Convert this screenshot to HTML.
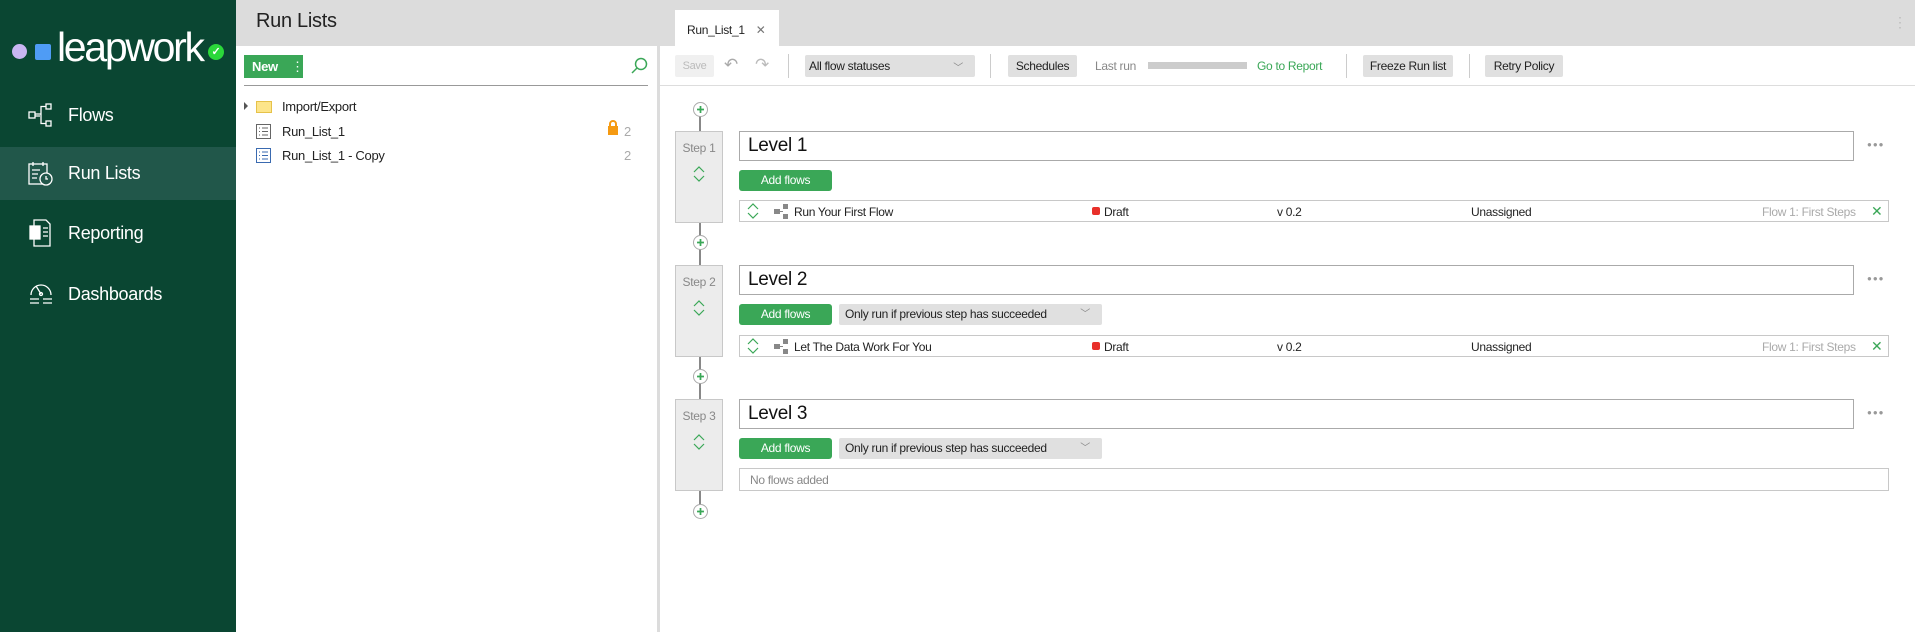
<!DOCTYPE html>
<html><head><meta charset="utf-8"><style>
*{box-sizing:border-box;margin:0;padding:0}
body{width:1915px;height:632px;overflow:hidden;background:#fff;font-family:"Liberation Sans",sans-serif;color:#222;position:relative;letter-spacing:-0.3px}
.a{position:absolute}
.sb{left:0;top:0;width:236px;height:632px;background:#0a4632}
.nav{left:0;width:236px;height:54px;color:#fff;font-size:18px;display:flex;align-items:center}
.nav span{position:absolute;left:68px}
.nav svg{position:absolute;left:28px}
.btn{background:#e0e0e0;border-radius:2px;font-size:12px;display:flex;align-items:center;justify-content:center;height:22px;top:55px;color:#222}
.sep{width:1px;height:24px;top:54px;background:#ccc}
.plus{width:15px;height:15px;border:1px solid #aaa;border-radius:50%;background:#fff;left:693px}
.step{left:675px;width:48px;height:92px;background:#ececec;border:1px solid #c8c8c8;color:#888;font-size:12px;text-align:center;padding-top:9px}
.lvl{left:739px;width:1115px;height:30px;border:1px solid #aaa;font-size:19px;padding-left:8px;line-height:28px;color:#111}
.dots{left:1867px;color:#999;font-size:8px;letter-spacing:1px}
.add{left:739px;width:93px;height:21px;background:#3aa757;color:#fff;border-radius:3px;font-size:12px;text-align:center;line-height:21px}
.dd{left:839px;width:263px;height:21px;background:#e0e0e0;border-radius:2px;font-size:12px;line-height:21px;padding-left:6px}
.row{left:739px;width:1150px;height:22px;border:1px solid #c8c8c8;font-size:12px}
.row .a{top:4px}
</style></head><body>
<svg width="0" height="0" style="position:absolute"><defs>
<symbol id="ch" viewBox="0 0 12 18"><path d="M1 7l5-5 5 5M1 11l5 5 5-5" fill="none" stroke="#3aa757" stroke-width="1.2"/></symbol>
<symbol id="pl" viewBox="0 0 15 15"><path d="M7.5 3.5v8M3.5 7.5h8" stroke="#3aa757" stroke-width="2"/></symbol>
<symbol id="fl" viewBox="0 0 16 16"><rect x="1" y="6" width="6" height="5" fill="#888"/><rect x="10" y="1" width="5" height="5" fill="#888"/><rect x="10" y="11" width="5" height="5" fill="#888"/><path d="M7 8.5h3" stroke="#888"/></symbol>
</defs></svg>
<div class="a sb"></div>
<div class="a" style="left:12px;top:44px;width:15px;height:15px;border-radius:50%;background:#c9b6f2"></div>
<div class="a" style="left:35px;top:44px;width:16px;height:16px;border-radius:2px;background:#4f9cf5"></div>
<div class="a" style="left:57px;top:24px;color:#fff;font-size:41px;letter-spacing:-2.3px">leapwork</div>
<div class="a" style="left:208px;top:44px;width:16px;height:16px;border-radius:50%;background:#2bd83a;color:#fff;font-size:11px;text-align:center;line-height:16px;font-weight:bold">✓</div>
<div class="a nav" style="top:88px"><svg width="26" height="26" viewBox="0 0 26 26" fill="none" stroke="#fff" stroke-width="1.3"><rect x="1" y="10" width="6" height="6"/><rect x="18" y="2" width="5" height="5"/><rect x="18" y="19" width="5" height="5"/><path d="M7 12L13 12L13 4.5L18 4.5M13 12V21.5H18M7 14L12 14"/></svg><span>Flows</span></div>
<div class="a nav" style="top:147px;height:53px;background:#21574a"><svg width="26" height="26" viewBox="0 0 26 26" fill="none" stroke="#fff" stroke-width="1.3"><rect x="1" y="3" width="18" height="20"/><path d="M5 1v4M15 1v4M4 9h8M4 13h6M4 17h5"/><circle cx="18" cy="18" r="6" fill="#21574a"/><path d="M18 15v3h2"/></svg><span>Run Lists</span></div>
<div class="a nav" style="top:206px"><svg width="26" height="28" viewBox="0 0 26 28" fill="none" stroke="#fff" stroke-width="1.3"><path d="M6 1h12l4 4v22H6z"/><rect x="2" y="7" width="10" height="13" fill="#fff"/><path d="M15 9h5M15 13h5M15 17h5"/></svg><span>Reporting</span></div>
<div class="a nav" style="top:267px"><svg width="26" height="26" viewBox="0 0 26 26" fill="none" stroke="#fff" stroke-width="1.3"><path d="M3 14a10 10 0 0 1 20 0"/><path d="M8 5l5 8"/><circle cx="13" cy="13" r="1.5"/><path d="M2 18h9M15 18h9M2 22h9M15 22h9"/></svg><span>Dashboards</span></div>

<div class="a" style="left:236px;top:0;width:421px;height:46px;background:#dcdcdc"></div>
<div class="a" style="left:256px;top:10px;font-size:20px;color:#222">Run Lists</div>
<div class="a" style="left:244px;top:55px;width:59px;height:23px;background:#3aa757;color:#fff;font-size:13px;font-weight:bold;line-height:23px;padding-left:8px">New<span style="position:absolute;left:47px;top:0;font-weight:normal">⋮</span></div>
<svg class="a" style="left:630px;top:57px" width="18" height="18" viewBox="0 0 18 18" fill="none" stroke="#3aa757" stroke-width="1.5"><circle cx="11" cy="7" r="5.5"/><path d="M7 11L2 16"/></svg>
<div class="a" style="left:244px;top:85px;width:404px;height:1px;background:#999"></div>
<div class="a" style="left:244px;top:102px;width:0;height:0;border-left:4px solid #555;border-top:4px solid transparent;border-bottom:4px solid transparent"></div>
<div class="a" style="left:256px;top:101px;width:16px;height:12px;background:#fde58a;border:1px solid #e6c24a"></div>
<div class="a" style="left:282px;top:99px;font-size:13px">Import/Export</div>
<svg class="a" style="left:256px;top:124px" width="15" height="15" viewBox="0 0 15 15" fill="none" stroke="#666"><rect x=".5" y=".5" width="14" height="14"/><path d="M3 4h1M6 4h6M3 7.5h1M6 7.5h6M3 11h1M6 11h6"/></svg>
<div class="a" style="left:282px;top:124px;font-size:13px">Run_List_1</div>
<div class="a" style="left:608px;top:126px;width:10px;height:9px;background:#f59a12"></div><div class="a" style="left:609px;top:120px;width:8px;height:9px;border:2px solid #f59a12;border-radius:4px 4px 0 0"></div>
<div class="a" style="left:624px;top:124px;font-size:13px;color:#aaa">2</div>
<svg class="a" style="left:256px;top:148px" width="15" height="15" viewBox="0 0 15 15" fill="none" stroke="#3a6ab0"><rect x=".5" y=".5" width="14" height="14"/><path d="M3 4h1M6 4h6M3 7.5h1M6 7.5h6M3 11h1M6 11h6"/></svg>
<div class="a" style="left:282px;top:148px;font-size:13px">Run_List_1 - Copy</div>
<div class="a" style="left:624px;top:148px;font-size:13px;color:#aaa">2</div>
<div class="a" style="left:657px;top:0;width:3px;height:632px;background:#dcdcdc"></div>

<div class="a" style="left:660px;top:0;width:1255px;height:46px;background:#dcdcdc"></div>
<div class="a" style="left:675px;top:10px;width:104px;height:36px;background:#fff;font-size:12px;padding:13px 0 0 12px">Run_List_1 <span style="color:#777;margin-left:8px">✕</span></div>
<div class="a" style="left:1893px;top:14px;color:#bbb;font-size:14px">⋮</div>
<div class="a btn" style="left:675px;width:39px;background:#f0f0f0;color:#bbb;font-size:11px">Save</div>
<div class="a" style="left:724px;top:55px;color:#aaa;font-size:17px">↶</div>
<div class="a" style="left:755px;top:55px;color:#bbb;font-size:17px">↷</div>
<div class="a sep" style="left:788px"></div>
<div class="a btn" style="left:805px;width:170px;justify-content:flex-start;padding-left:4px">All flow statuses<span style="position:absolute;right:12px;color:#888;font-size:10px">﹀</span></div>
<div class="a sep" style="left:990px"></div>
<div class="a btn" style="left:1008px;width:69px">Schedules</div>
<div class="a" style="left:1095px;top:59px;font-size:12px;color:#888">Last run</div>
<div class="a" style="left:1148px;top:62px;width:99px;height:7px;background:#ccc"></div>
<div class="a" style="left:1257px;top:59px;font-size:12px;color:#3aa757">Go to Report</div>
<div class="a sep" style="left:1346px"></div>
<div class="a btn" style="left:1363px;width:90px">Freeze Run list</div>
<div class="a sep" style="left:1469px"></div>
<div class="a btn" style="left:1485px;width:78px">Retry Policy</div>
<div class="a" style="left:660px;top:85px;width:1255px;height:1px;background:#ddd"></div>

<div class="a" style="left:699px;top:110px;width:2px;height:402px;background:#888"></div>
<div class="a plus" style="top:102px"><svg width="13" height="13"><use href="#pl"/></svg></div>
<div class="a plus" style="top:235px"><svg width="13" height="13"><use href="#pl"/></svg></div>
<div class="a plus" style="top:369px"><svg width="13" height="13"><use href="#pl"/></svg></div>
<div class="a plus" style="top:504px"><svg width="13" height="13"><use href="#pl"/></svg></div>

<div class="a step" style="top:131px">Step 1<br><svg width="12" height="18" style="margin-top:10px"><use href="#ch"/></svg></div>
<div class="a lvl" style="top:131px">Level 1</div><div class="a dots" style="top:140px">●●●</div>
<div class="a add" style="top:170px">Add flows</div>
<div class="a row" style="top:200px"><svg class="a" style="left:7px;top:1px" width="12" height="18"><use href="#ch"/></svg><svg class="a" style="left:33px;top:2px" width="16" height="16"><use href="#fl"/></svg><div class="a" style="left:54px">Run Your First Flow</div><div class="a" style="left:352px;top:6px;width:8px;height:8px;border-radius:2px;background:#e8302a"></div><div class="a" style="left:364px">Draft</div><div class="a" style="left:537px">v 0.2</div><div class="a" style="left:731px">Unassigned</div><div class="a" style="left:1022px;color:#aaa">Flow 1: First Steps</div><div class="a" style="left:1131px;top:2px;color:#3aa757;font-size:14px">✕</div></div>

<div class="a step" style="top:265px">Step 2<br><svg width="12" height="18" style="margin-top:10px"><use href="#ch"/></svg></div>
<div class="a lvl" style="top:265px">Level 2</div><div class="a dots" style="top:274px">●●●</div>
<div class="a add" style="top:304px">Add flows</div>
<div class="a dd" style="top:304px">Only run if previous step has succeeded<span style="position:absolute;right:12px;color:#888;font-size:10px">﹀</span></div>
<div class="a row" style="top:335px"><svg class="a" style="left:7px;top:1px" width="12" height="18"><use href="#ch"/></svg><svg class="a" style="left:33px;top:2px" width="16" height="16"><use href="#fl"/></svg><div class="a" style="left:54px">Let The Data Work For You</div><div class="a" style="left:352px;top:6px;width:8px;height:8px;border-radius:2px;background:#e8302a"></div><div class="a" style="left:364px">Draft</div><div class="a" style="left:537px">v 0.2</div><div class="a" style="left:731px">Unassigned</div><div class="a" style="left:1022px;color:#aaa">Flow 1: First Steps</div><div class="a" style="left:1131px;top:2px;color:#3aa757;font-size:14px">✕</div></div>

<div class="a step" style="top:399px">Step 3<br><svg width="12" height="18" style="margin-top:10px"><use href="#ch"/></svg></div>
<div class="a lvl" style="top:399px">Level 3</div><div class="a dots" style="top:408px">●●●</div>
<div class="a add" style="top:438px">Add flows</div>
<div class="a dd" style="top:438px">Only run if previous step has succeeded<span style="position:absolute;right:12px;color:#888;font-size:10px">﹀</span></div>
<div class="a row" style="top:468px;height:23px"><div class="a" style="left:10px;color:#888">No flows added</div></div>
</body></html>
